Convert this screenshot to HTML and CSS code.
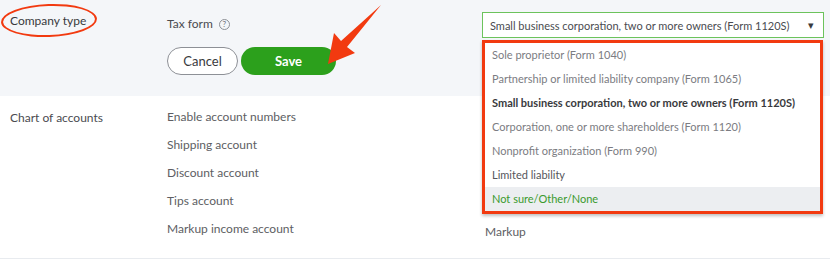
FILE: index.html
```html
<!DOCTYPE html>
<html lang="en">
<head>
    <meta charset="UTF-8">
    <title>Company settings</title>
    <link rel="stylesheet" href="styles.css">
</head>
<body>
    <div class="row row-edit">
        <div class="label">
            <span class="circled">Company type</span>
        </div>
        <div class="middle">
            <div class="field-label">Tax form <span class="help">?</span></div>
            <div class="buttons">
                <button class="btn btn-cancel">Cancel</button>
                <button class="btn btn-save">Save</button>
            </div>
        </div>
        <div class="right">
            <div class="select">
                <span>Small business corporation, two or more owners (Form 1120S)</span>
                <span class="caret">&#9662;</span>
            </div>
            <ul class="menu">
                <li>Sole proprietor (Form 1040)</li>
                <li>Partnership or limited liability company (Form 1065)</li>
                <li class="selected">Small business corporation, two or more owners (Form 1120S)</li>
                <li>Corporation, one or more shareholders (Form 1120)</li>
                <li>Nonprofit organization (Form 990)</li>
                <li class="dark">Limited liability</li>
                <li class="hover">Not sure/Other/None</li>
            </ul>
        </div>
        <!-- annotation arrow -->
        <svg class="arrow" width="60" height="64" viewBox="0 0 60 64">
            <polygon points="55,2 21,44 29,50 2,61 8,30 15,38" fill="#f23a10"/>
        </svg>
    </div>

    <div class="row row-view">
        <div class="label">Chart of accounts</div>
        <div class="middle">
            <ul class="items">
                <li>Enable account numbers</li>
                <li>Shipping account</li>
                <li>Discount account</li>
                <li>Tips account</li>
                <li>Markup income account</li>
            </ul>
        </div>
        <div class="right">
            <div class="markup">Markup</div>
        </div>
    </div>
</body>
</html>
```

FILE: styles.css
```css
body {
    margin: 0;
    font-family: Lato, "Open Sans", sans-serif;
    font-size: 12px;
    color: #393a3d;
    background: #fff;
}

ul {
    list-style: none;
    margin: 0;
    padding: 0;
}

.row {
    display: grid;
    grid-template-columns: 157px 315px 342px;
    padding-left: 10px;
    position: relative;
}

.row-edit {
    height: 96px;
    background-color: #f4f6f9;
}

.row-view {
    height: 162px;
    border-bottom: 1px solid #e8ebef;
}

.label {
    padding-top: 13px;
    line-height: 16px;
}

.row-view .label {
    padding-top: 14px;
    color: #4a4b50;
}

.circled {
    position: relative;
}

.circled::after {
    content: "";
    position: absolute;
    left: -9px;
    top: -9px;
    width: 92px;
    height: 29px;
    border: 2px solid #f23a10;
    border-radius: 50%;
    transform: rotate(-2deg);
}

.field-label {
    margin-top: 16px;
    line-height: 16px;
    color: #4a4b50;
    display: flex;
    align-items: center;
    gap: 6px;
}

.help {
    width: 9px;
    height: 9px;
    border: 1px solid #8d9096;
    border-radius: 50%;
    font-size: 8px;
    line-height: 9px;
    text-align: center;
    color: #6b6c72;
}

.buttons {
    display: flex;
    gap: 3px;
    margin-top: 15px;
}

.btn {
    height: 28px;
    border-radius: 14px;
    font-family: inherit;
    font-size: 13px;
    padding: 0;
}

.btn-cancel {
    width: 71px;
    background: #fff;
    border: 1px solid #8d9096;
    color: #393a3d;
}

.btn-save {
    width: 95px;
    background: #2ca01c;
    border: none;
    color: #fff;
    font-weight: bold;
}

.right {
    position: relative;
}

.select {
    margin-top: 12px;
    height: 24px;
    border: 1px solid #6cc35c;
    background: #fff;
    display: flex;
    align-items: center;
    justify-content: space-between;
    padding: 0 9px 0 7px;
    font-size: 11px;
    color: #4a4b50;
}

.caret {
    font-size: 11px;
    color: #393a3d;
}

.menu {
    position: absolute;
    top: 40px;
    left: 0;
    width: 335px;
    background: #fff;
    border: 3px solid #f23a10;
    box-shadow: 0 2px 3px rgba(0, 0, 0, 0.25);
    z-index: 2;
}

.menu li {
    height: 24px;
    line-height: 24px;
    padding-left: 7px;
    font-size: 11px;
    color: #7b7c82;
}

.menu .selected {
    color: #393a3d;
    font-weight: bold;
}

.menu .dark {
    color: #55565b;
}

.menu .hover {
    background: #eceef1;
    color: #3a9a2e;
}

.arrow {
    position: absolute;
    left: 326px;
    top: 3px;
    z-index: 3;
}

.items {
    padding-top: 13px;
}

.items li {
    height: 28px;
    line-height: 16px;
    color: #5d5e63;
}

.markup {
    margin-top: 128px;
    padding-left: 3px;
    color: #5d5e63;
}
```
